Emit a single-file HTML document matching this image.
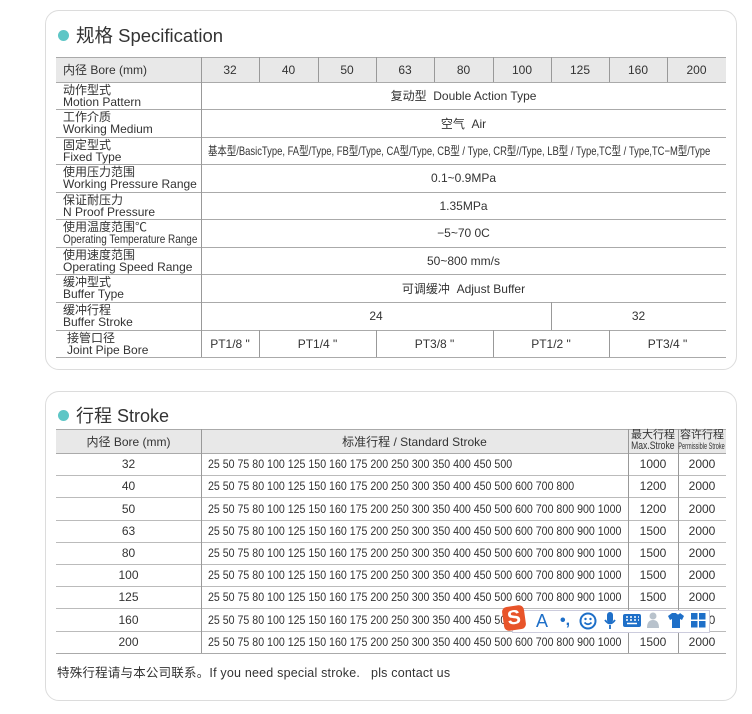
<!DOCTYPE html>
<html><head><meta charset="utf-8"><style>
*{margin:0;padding:0;box-sizing:border-box}
body{width:752px;height:714px;background:#fff;position:relative;overflow:hidden;font-family:"Liberation Sans","Noto Sans CJK SC",sans-serif;color:#333}
.a{position:absolute}
.card{position:absolute;border:1px solid #dcdcdc;border-radius:14px;background:#fff}
.t{position:absolute;font-size:17px;color:#333;display:flex;align-items:center}
.dot{width:11px;height:11px;border-radius:50%;background:#5ec6c6;margin-right:7px}
.hl{position:absolute;height:1px;background:#aaa}
.vl{position:absolute;width:1px;background:#999}
.c{position:absolute;display:flex;align-items:center;justify-content:center;font-size:12px;white-space:nowrap}
.lb{position:absolute;left:63px;font-size:12px;line-height:11.5px;white-space:nowrap}
.nar{display:inline-block;transform:scaleX(.8);transform-origin:left center;white-space:nowrap}
.sn{display:inline-block;transform:scaleX(.885);transform-origin:left center;white-space:nowrap}
</style></head><body>
<div class="card" style="left:45px;top:10px;width:692px;height:360px"></div>
<div class="card" style="left:45px;top:391px;width:692px;height:310px"></div>

<div class="t" style="left:58px;top:22px;font-size:18.5px"><span class="dot"></span>规格 Specification</div>
<div class="a" style="left:56px;top:57px;width:670px;height:25px;background:#e8e8e8"></div>
<div class="hl" style="left:56px;top:57px;width:670px"></div>
<div class="hl" style="left:56px;top:82px;width:670px"></div>
<div class="hl" style="left:56px;top:109px;width:670px"></div>
<div class="hl" style="left:56px;top:137px;width:670px"></div>
<div class="hl" style="left:56px;top:164px;width:670px"></div>
<div class="hl" style="left:56px;top:192px;width:670px"></div>
<div class="hl" style="left:56px;top:219px;width:670px"></div>
<div class="hl" style="left:56px;top:247px;width:670px"></div>
<div class="hl" style="left:56px;top:274px;width:670px"></div>
<div class="hl" style="left:56px;top:302px;width:670px"></div>
<div class="hl" style="left:56px;top:330px;width:670px"></div>
<div class="hl" style="left:56px;top:357px;width:670px"></div>
<div class="vl" style="left:201px;top:57px;height:300px"></div>
<div class="vl" style="left:259px;top:57px;height:25px"></div>
<div class="vl" style="left:318px;top:57px;height:25px"></div>
<div class="vl" style="left:376px;top:57px;height:25px"></div>
<div class="vl" style="left:434px;top:57px;height:25px"></div>
<div class="vl" style="left:493px;top:57px;height:25px"></div>
<div class="vl" style="left:551px;top:57px;height:25px"></div>
<div class="vl" style="left:609px;top:57px;height:25px"></div>
<div class="vl" style="left:667px;top:57px;height:25px"></div>
<div class="vl" style="left:551px;top:302px;height:28px"></div>
<div class="vl" style="left:259px;top:330px;height:27px"></div>
<div class="vl" style="left:376px;top:330px;height:27px"></div>
<div class="vl" style="left:493px;top:330px;height:27px"></div>
<div class="vl" style="left:609px;top:330px;height:27px"></div>

<div class="c" style="left:63px;top:57px;height:25px;justify-content:flex-start">内径 Bore (mm)</div>
<div class="c" style="left:201px;top:57px;width:58px;height:25px">32</div>
<div class="c" style="left:259px;top:57px;width:59px;height:25px">40</div>
<div class="c" style="left:318px;top:57px;width:58px;height:25px">50</div>
<div class="c" style="left:376px;top:57px;width:58px;height:25px">63</div>
<div class="c" style="left:434px;top:57px;width:59px;height:25px">80</div>
<div class="c" style="left:493px;top:57px;width:58px;height:25px">100</div>
<div class="c" style="left:551px;top:57px;width:58px;height:25px">125</div>
<div class="c" style="left:609px;top:57px;width:58px;height:25px">160</div>
<div class="c" style="left:667px;top:57px;width:59px;height:25px">200</div>

<div class="lb" style="top:85px">动作型式<br>Motion Pattern</div>
<div class="lb" style="top:112px">工作介质<br>Working Medium</div>
<div class="lb" style="top:140px">固定型式<br>Fixed Type</div>
<div class="lb" style="top:167px">使用压力范围<br>Working Pressure Range</div>
<div class="lb" style="top:195px">保证耐压力<br>N Proof Pressure</div>
<div class="lb" style="top:222px">使用温度范围℃<br><span class="nar" style="transform:scaleX(.83)">Operating Temperature Range</span></div>
<div class="lb" style="top:250px">使用速度范围<br>Operating Speed Range</div>
<div class="lb" style="top:277px">缓冲型式<br>Buffer Type</div>
<div class="lb" style="top:305px">缓冲行程<br>Buffer Stroke</div>
<div class="lb" style="top:333px;left:67px">接管口径<br>Joint Pipe Bore</div>

<div class="c" style="left:201px;top:82px;width:525px;height:27px">复动型&nbsp; Double Action Type</div>
<div class="c" style="left:201px;top:109px;width:525px;height:28px">空气&nbsp; Air</div>
<div class="c" style="left:201px;top:137px;width:525px;height:27px;justify-content:flex-start"><span class="nar" style="margin-left:7px;font-size:12px;transform:scaleX(.785)">基本型/BasicType, FA型/Type, FB型/Type, CA型/Type, CB型 / Type, CR型//Type, LB型 / Type,TC型 / Type,TC−M型/Type</span></div>
<div class="c" style="left:201px;top:164px;width:525px;height:28px">0.1~0.9MPa</div>
<div class="c" style="left:201px;top:192px;width:525px;height:27px">1.35MPa</div>
<div class="c" style="left:201px;top:219px;width:525px;height:28px">−5~70 0C</div>
<div class="c" style="left:201px;top:247px;width:525px;height:27px">50~800 mm/s</div>
<div class="c" style="left:201px;top:274px;width:525px;height:28px">可调缓冲&nbsp; Adjust Buffer</div>
<div class="c" style="left:201px;top:302px;width:350px;height:28px">24</div>
<div class="c" style="left:551px;top:302px;width:175px;height:28px">32</div>
<div class="c" style="left:201px;top:330px;width:58px;height:27px">PT1/8 "</div>
<div class="c" style="left:259px;top:330px;width:117px;height:27px">PT1/4 "</div>
<div class="c" style="left:376px;top:330px;width:117px;height:27px">PT3/8 "</div>
<div class="c" style="left:493px;top:330px;width:116px;height:27px">PT1/2 "</div>
<div class="c" style="left:609px;top:330px;width:117px;height:27px">PT3/4 "</div>

<div class="t" style="left:58px;top:402px;font-size:18px"><span class="dot"></span>行程 Stroke</div>
<div class="a" style="left:56px;top:429px;width:670px;height:24px;background:#e8e8e8"></div>
<div class="hl" style="left:56px;top:429px;width:670px"></div>
<div class="hl" style="left:56px;top:453px;width:670px"></div>
<div class="hl" style="left:56px;top:475px;width:670px;background:#bbb"></div>
<div class="hl" style="left:56px;top:497px;width:670px;background:#bbb"></div>
<div class="hl" style="left:56px;top:520px;width:670px;background:#bbb"></div>
<div class="hl" style="left:56px;top:542px;width:670px;background:#bbb"></div>
<div class="hl" style="left:56px;top:564px;width:670px;background:#bbb"></div>
<div class="hl" style="left:56px;top:586px;width:670px;background:#bbb"></div>
<div class="hl" style="left:56px;top:608px;width:670px;background:#bbb"></div>
<div class="hl" style="left:56px;top:631px;width:670px;background:#bbb"></div>
<div class="hl" style="left:56px;top:653px;width:670px"></div>
<div class="vl" style="left:201px;top:429px;height:224px"></div>
<div class="vl" style="left:628px;top:429px;height:224px"></div>
<div class="vl" style="left:678px;top:429px;height:224px"></div>

<div class="c" style="left:56px;top:429px;width:145px;height:24px">内径 Bore (mm)</div>
<div class="c" style="left:201px;top:429px;width:427px;height:24px">标准行程 / Standard Stroke</div>
<div class="c" style="left:628px;top:429px;width:50px;height:24px;flex-direction:column;line-height:11px;font-size:11px"><span>最大行程</span><span class="nar" style="transform:scaleX(.78);transform-origin:center">Max.Stroke</span></div>
<div class="c" style="left:678px;top:429px;width:48px;height:24px;flex-direction:column;line-height:11px;font-size:11px"><span>容许行程</span><span style="display:inline-block;font-size:9px;transform:scaleX(.62);transform-origin:center">Permissible Stroke</span></div>

<div class="c" style="left:56px;top:453px;width:145px;height:22px">32</div>
<div class="c" style="left:56px;top:475px;width:145px;height:22px">40</div>
<div class="c" style="left:56px;top:497px;width:145px;height:23px">50</div>
<div class="c" style="left:56px;top:520px;width:145px;height:22px">63</div>
<div class="c" style="left:56px;top:542px;width:145px;height:22px">80</div>
<div class="c" style="left:56px;top:564px;width:145px;height:22px">100</div>
<div class="c" style="left:56px;top:586px;width:145px;height:22px">125</div>
<div class="c" style="left:56px;top:608px;width:145px;height:23px">160</div>
<div class="c" style="left:56px;top:631px;width:145px;height:22px">200</div>

<div class="c" style="left:208px;top:453px;height:22px"><span class="sn">25 50 75 80 100 125 150 160 175 200 250 300 350 400 450 500</span></div>
<div class="c" style="left:208px;top:475px;height:22px"><span class="sn">25 50 75 80 100 125 150 160 175 200 250 300 350 400 450 500 600 700 800</span></div>
<div class="c" style="left:208px;top:497px;height:23px"><span class="sn">25 50 75 80 100 125 150 160 175 200 250 300 350 400 450 500 600 700 800 900 1000</span></div>
<div class="c" style="left:208px;top:520px;height:22px"><span class="sn">25 50 75 80 100 125 150 160 175 200 250 300 350 400 450 500 600 700 800 900 1000</span></div>
<div class="c" style="left:208px;top:542px;height:22px"><span class="sn">25 50 75 80 100 125 150 160 175 200 250 300 350 400 450 500 600 700 800 900 1000</span></div>
<div class="c" style="left:208px;top:564px;height:22px"><span class="sn">25 50 75 80 100 125 150 160 175 200 250 300 350 400 450 500 600 700 800 900 1000</span></div>
<div class="c" style="left:208px;top:586px;height:22px"><span class="sn">25 50 75 80 100 125 150 160 175 200 250 300 350 400 450 500 600 700 800 900 1000</span></div>
<div class="c" style="left:208px;top:608px;height:23px"><span class="sn">25 50 75 80 100 125 150 160 175 200 250 300 350 400 450 500 600 700 800 900 1000</span></div>
<div class="c" style="left:208px;top:631px;height:22px"><span class="sn">25 50 75 80 100 125 150 160 175 200 250 300 350 400 450 500 600 700 800 900 1000</span></div>

<div class="c" style="left:628px;top:453px;width:50px;height:22px">1000</div>
<div class="c" style="left:628px;top:475px;width:50px;height:22px">1200</div>
<div class="c" style="left:628px;top:497px;width:50px;height:23px">1200</div>
<div class="c" style="left:628px;top:520px;width:50px;height:22px">1500</div>
<div class="c" style="left:628px;top:542px;width:50px;height:22px">1500</div>
<div class="c" style="left:628px;top:564px;width:50px;height:22px">1500</div>
<div class="c" style="left:628px;top:586px;width:50px;height:22px">1500</div>
<div class="c" style="left:628px;top:608px;width:50px;height:23px">1500</div>
<div class="c" style="left:628px;top:631px;width:50px;height:22px">1500</div>
<div class="c" style="left:678px;top:453px;width:48px;height:22px">2000</div>
<div class="c" style="left:678px;top:475px;width:48px;height:22px">2000</div>
<div class="c" style="left:678px;top:497px;width:48px;height:23px">2000</div>
<div class="c" style="left:678px;top:520px;width:48px;height:22px">2000</div>
<div class="c" style="left:678px;top:542px;width:48px;height:22px">2000</div>
<div class="c" style="left:678px;top:564px;width:48px;height:22px">2000</div>
<div class="c" style="left:678px;top:586px;width:48px;height:22px">2000</div>
<div class="c" style="left:678px;top:608px;width:48px;height:23px">2000</div>
<div class="c" style="left:678px;top:631px;width:48px;height:22px">2000</div>

<div class="a" style="left:57px;top:662px;font-size:12.5px;white-space:nowrap;letter-spacing:.2px">特殊行程请与本公司联系。If you need special stroke.&nbsp;&nbsp; pls contact us</div>

<div class="a" style="left:512px;top:610px;width:198px;height:23px;background:#fff;border:1px solid #ccd"></div>
<div class="a" style="left:503px;top:606px;width:22px;height:24px;background:#e8542a;border-radius:5px;transform:rotate(-8deg);color:#fff;font-weight:bold;font-size:20px;line-height:24px;text-align:center">S</div>
<div class="a" style="left:536px;top:611px;font-size:18px;color:#1e6fc8;line-height:20px">A</div>
<div class="a" style="left:560px;top:611px;font-size:16px;color:#1e6fc8;font-weight:bold;line-height:20px">•,</div>
<svg class="a" style="left:579px;top:612px" width="18" height="18"><circle cx="9" cy="9" r="7.5" fill="none" stroke="#1e6fc8" stroke-width="2"/><circle cx="6.5" cy="7" r="1.2" fill="#1e6fc8"/><circle cx="11.5" cy="7" r="1.2" fill="#1e6fc8"/><path d="M5.5 10.5q3.5 3.5 7 0" fill="none" stroke="#1e6fc8" stroke-width="1.6"/></svg>
<svg class="a" style="left:603px;top:611px" width="14" height="20"><rect x="4" y="1" width="6" height="11" rx="3" fill="#1e6fc8"/><path d="M2 9q5 7 10 0M7 14v4" fill="none" stroke="#1e6fc8" stroke-width="1.8"/></svg>
<svg class="a" style="left:623px;top:614px" width="18" height="13"><rect x="0" y="0" width="18" height="13" rx="2" fill="#1e6fc8"/><path d="M3 3h2M7 3h2M11 3h2M15 3h1M3 6h2M7 6h2M11 6h2M15 6h1M4 9.5h10" stroke="#fff" stroke-width="1.4"/></svg>
<svg class="a" style="left:646px;top:611px" width="16" height="20"><circle cx="7" cy="5" r="3.5" fill="#b8c2cc"/><path d="M1 17q0-8 6-8t6 8z" fill="#b8c2cc"/></svg>
<svg class="a" style="left:668px;top:612px" width="18" height="17"><path d="M5 1l-4 3 2 4 2-1v9h8V7l2 1 2-4-4-3q-2 3-4 0z" fill="#1e6fc8" transform="translate(-1,0)"/></svg>
<svg class="a" style="left:691px;top:613px" width="15" height="15"><rect x="0" y="0" width="6.5" height="6.5" fill="#1e6fc8"/><rect x="8" y="0" width="6.5" height="6.5" fill="#1e6fc8"/><rect x="0" y="8" width="6.5" height="6.5" fill="#1e6fc8"/><rect x="8" y="8" width="6.5" height="6.5" fill="#1e6fc8"/></svg>
</body></html>
